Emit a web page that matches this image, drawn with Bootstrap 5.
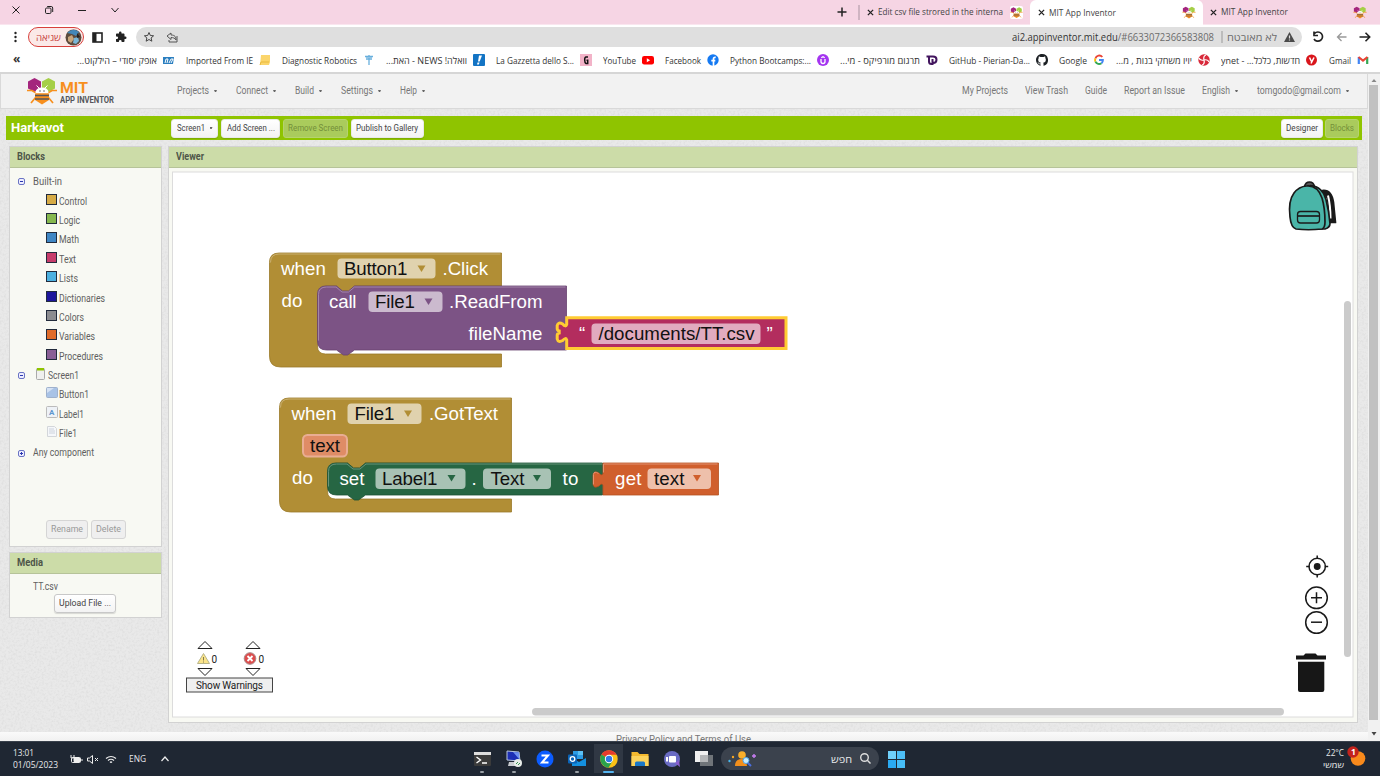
<!DOCTYPE html>
<html lang="en">
<head>
<meta charset="utf-8">
<title>MIT App Inventor</title>
<link href="https://cdn.jsdelivr.net/npm/bootstrap@5.3.0/dist/css/bootstrap.min.css" rel="stylesheet">
<style>
  body { width: 1380px; height: 776px; overflow: hidden; background: #fff; font-family: Roboto, "Liberation Sans", sans-serif; font-size: 10px; line-height: 1; color: #333; }
  svg { display: block; flex: none; overflow: visible; }
  [data-w] { white-space: nowrap; flex: none; display: inline-block; transform-origin: left center; }
  .seg { font-family: "Open Sans", "Noto Sans", "Liberation Sans", sans-serif; }
  .tabstrip { height: 25px; background: linear-gradient(#f6d5e4 24px, #fae6ef 24px); }
  .winctl { width: 128px; padding-left: 11px; gap: 23px; height: 20px; }
  .btab { height: 24px; font-size: 9.2px; color: #444; }
  .btab.cur { background: #fff; border-radius: 6px 6px 0 0; height: 25px; }
  .addrbar { height: 24px; background: #fff; }
  .profile { width: 56px; height: 20px; border: 1px solid #d8403c; border-radius: 10px; background: #fbe9e8; color: #c7413c; font-size: 9px; margin-left: 6px; padding-right: 1px; }
  .omni { height: 20px; width: 1166px; border-radius: 10px; background: #dfdfdf; color: #333; font-size: 10px; }
  .omni .dim { color: #6c6c6c; }
  .bookbar { height: 25px; background: #fff; border-bottom: 2px solid #d6d6d6; font-size: 9px; color: #333; padding: 0 0 1px 13px; }
  .bookbar .bm { margin-right: 11px; gap: 6px; }
  .pagearea { height: 667px; position: relative; }
  .leftpage { width: 1368px; background: #e9e9e9 url("data:image/svg+xml,%3Csvg xmlns='http://www.w3.org/2000/svg' width='120' height='120'%3E%3Cfilter id='n'%3E%3CfeTurbulence type='fractalNoise' baseFrequency='.45' numOctaves='2' stitchTiles='stitch'/%3E%3CfeColorMatrix values='0 0 0 0 .5 0 0 0 0 .5 0 0 0 0 .5 .5 0 0 0 -.21'/%3E%3C/filter%3E%3Crect width='120' height='120' filter='url(%23n)'/%3E%3C/svg%3E"); }
  .apphead { height: 35px; background: #f2f2f2; border: 1px solid #d9d9d9; border-top: 0; color: #777; }
  .logo-txt b { display: block; color: #f78f1e; font-size: 15px; line-height: 14px; }
  .logo-txt > span { color: #55565a; font-weight: 700; font-size: 8.5px; line-height: 7px; }
  .menu-item { margin-right: 19px; }
  .dot { width: 3px; height: 2px; background: #666; clip-path: polygon(0 0, 100% 0, 70% 100%, 30% 100%); margin-left: 5px; }
  .greenbar { height: 24px; margin: 7px 6px 0; background: #8fc400; }
  .proj { font-size: 13.5px; font-weight: 700; color: #fff; width: 165px; padding-left: 5px; }
  .abtn { height: 19px; border: 1px solid #c8c8c8; border-radius: 3px; background: linear-gradient(#fff, #f3f3f3); color: #444; font-size: 9px; box-shadow: 0 1px 1px #0002; }
  .greenbar .abtn { border-color: #e9e9e9; }
  .greenbar .abtn.off { background: #aacb5c; color: #74903a; border-color: #b5d36e; box-shadow: none; }
  .abtn.off { background: #efefef; color: #999; border-color: #d5d5d5; box-shadow: none; }
  .panel { background: #f8f9f3; border: 1px solid #d2d2d2; }
  .panel-t { height: 21px; background: #ccdca8; border-bottom: 1px solid #b6c399; font-weight: 700; color: #4e5548; padding: 0 6.500px; }
  .side { width: 153px; margin-left: 9px; }
  .treerow { height: 19.4px; color: #606060; }
  .toggle-c { width: 23px; padding-left: 8px; }
  .lv1 { padding-left: 36px; gap: 2px; }
  .lv1 > span:last-child { margin-top: 1px; }
  .sw { width: 11px; height: 11px; border: 1px solid #222b3c; margin-bottom: 4px; flex: none; }
  .foot { height: 9px; margin-top: 9px; background: linear-gradient(#fafafa, #f1f1f1); overflow: hidden; color: #777; }
  .vscroll { width: 12px; background: #f1f1f1; }
  .vscroll .thumb { width: 9px; height: 635px; background: #c1c1c1; margin-left: 1px; }
  .taskbar { height: 35px; background: #1f2733; color: #e8eaec; border-top: 1px solid #39414c; font-size: 8.5px; }
  .ti { width: 31.7px; height: 34px; padding-top: 8px; }
  .ti svg { margin: 0 auto; }
  .ti i { display: block; width: 4px; height: 2px; border-radius: 1px; background: #9aa0a6; margin: 3px auto 0; }
  .ti.on { background: linear-gradient(#303844, #303844) center 2px / 29px 29px no-repeat; }
  .ti.on i { width: 11px; background: #54b4f0; }
  .find { width: 158px; height: 23px; border-radius: 12px; background: #3b424d; margin-left: 1px; }
  .blk text { font-family: "Liberation Sans", Arial, sans-serif; font-size: 18.7px; fill: #fff; }
  .blk text.k { fill: #111; }
  .warn text { font-family: Roboto, sans-serif; font-size: 10px; fill: #222; }
</style>
</head>
<body class="d-flex flex-column">
<svg width="0" height="0" class="position-absolute">
  <symbol id="bee" viewBox="0 0 32 28">
    <path d="M8.500 1l6.500 3.500v7L8.500 15 2 11.500v-7z" fill="#a4257d"/>
    <path d="M22.500 1L29 4.500v7L22.500 15 16 11.500v-7z" fill="#a5cf47"/>
    <path d="M1 13.500h5l4 2.500h12l4-2.500h5M5 26l5-6M27 26l-5-6" stroke="#f78f1e" stroke-width="1.700" fill="none"/>
    <path d="M9 17h14v6l-7 4.500L9 23z" fill="#f78f1e"/>
    <path d="M9 18.500h14M9 22h14" stroke="#55565a" stroke-width="1.300"/>
    <path d="M9.500 16q0-5.500 6.500-5.500t6.500 5.500z" fill="#fff"/>
    <path d="M13 11l-2.500-2.500M19 11l2.500-2.500" stroke="#fff"/><circle cx="14" cy="14" r=".7" fill="#444"/><circle cx="18" cy="14" r=".7" fill="#444"/>
  </symbol>
  <symbol id="cls" viewBox="0 0 8 8"><path d="M1 1l6 6M7 1L1 7" stroke="#222" stroke-width="1.500"/></symbol>
</svg>

<!-- tab strip -->
<div class="tabstrip d-flex flex-none">
  <div class="winctl d-flex align-items-center">
    <svg width="10" height="10" viewBox="0 0 10 10" stroke="#222" fill="none"><path d="M1.500 1.500l7 7M8.500 1.500l-7 7"/></svg>
    <svg width="10" height="10" viewBox="0 0 10 10" stroke="#222" fill="none"><rect x="1.500" y="3" width="5.500" height="5.500" rx="1.200"/><path d="M3.200 1.500h4q1.500 0 1.500 1.500v4"/></svg>
    <svg width="10" height="10" viewBox="0 0 10 10" stroke="#222"><path d="M1 5.500h8"/></svg>
    <svg width="10" height="10" viewBox="0 0 10 10" stroke="#222" fill="none"><path d="M1.500 3l3.500 4 3.500-4"/></svg>
  </div>
  <div class="ms-auto d-flex">
    <div class="btab d-flex align-items-center seg" style="width:193px">
      <svg width="10" height="10" viewBox="0 0 10 10"><path d="M5 .5v9M.5 5h9" stroke="#222" stroke-width="1.500"/></svg>
      <svg style="margin-left:11px" width="2" height="15"><path d="M1 0v15" stroke="#a993a0"/></svg>
      <svg style="margin-left:7px" width="7" height="7"><use href="#cls"/></svg>
      <span class="ps-1"></span><span data-w="125">Edit csv file strored in the interna</span>
      <svg style="margin-left:7px" width="13" height="13"><rect width="13" height="13" rx="2" fill="#fff"/><use href="#bee" width="13" height="13"/></svg>
    </div>
    <div class="btab cur d-flex align-items-center seg" style="width:173px;padding-left:8px">
      <svg width="7" height="7"><use href="#cls"/></svg>
      <span class="ps-1"></span><span data-w="67">MIT App Inventor</span>
      <svg class="ms-auto" style="margin-right:7px" width="14" height="13"><use href="#bee" width="14" height="13"/></svg>
    </div>
    <div class="btab d-flex align-items-center seg" style="width:177px;padding-left:7px">
      <svg width="7" height="7"><use href="#cls"/></svg>
      <span class="ps-1"></span><span data-w="67">MIT App Inventor</span>
      <svg class="ms-auto" style="margin-right:13px" width="14" height="13"><use href="#bee" width="14" height="13"/></svg>
    </div>
  </div>
</div>

<!-- address row -->
<div class="addrbar d-flex align-items-center">
  <svg style="margin-left:13px" width="4" height="12" fill="#222"><circle cx="2.500" cy="2" r="1.200"/><circle cx="2.500" cy="6" r="1.200"/><circle cx="2.500" cy="10" r="1.200"/></svg>
  <div class="profile d-flex align-items-center seg" style="margin-left:11px"><span style="width:7px"></span><span data-w="25" dir="rtl">שגיאה</span>
    <svg class="ms-auto" width="17" height="17" viewBox="0 0 17 17"><circle cx="8.500" cy="8.500" r="8" fill="#5d4a3c"/><path d="M2 4Q8-2 14 3l-3 4-4-2z" fill="#4387b8"/><path d="M3 8l4-2 2 4-3 4-3-2z" fill="#c8a57c"/><path d="M9 9l4-1 1 4-3 3-3-1z" fill="#79b5d6"/><path d="M12 4l3 4-3 1z" fill="#222"/></svg>
  </div>
  <svg style="margin-left:8px" width="11" height="11" viewBox="0 0 11 11"><rect x="1" y="1" width="9" height="9" fill="#fff" stroke="#222" stroke-width="1.600"/><path d="M1 1h3.500v9H1z" fill="#222"/></svg>
  <svg style="margin-left:12px" width="12" height="12" viewBox="0 0 24 24" fill="#222"><path d="M20.500 11H19V7c0-1.100-.9-2-2-2h-4V3.500a2.500 2.500 0 0 0-5 0V5H4c-1.100 0-2 .9-2 2v3.800h1.500a2.700 2.700 0 0 1 0 5.400H2V20c0 1.100.9 2 2 2h3.800v-1.500a2.700 2.700 0 0 1 5.400 0V22H17c1.100 0 2-.9 2-2v-4h1.500a2.500 2.500 0 0 0 0-5z"/></svg>
  <div class="omni d-flex align-items-center seg" style="margin-left:9px">
    <svg style="margin-left:7px" width="12" height="12" viewBox="0 0 24 24" fill="none" stroke="#444" stroke-width="2"><path d="M12 3l2.700 6 6.500.6-5 4.300 1.500 6.500L12 17l-5.700 3.400 1.500-6.500-5-4.300 6.500-.6z"/></svg>
    <svg style="margin-left:11px" width="12" height="11" viewBox="0 0 12 11" fill="none" stroke="#555"><path d="M1 4l4-3v2c4 0 5 2 5 5-1-2-3-2.500-5-2.500V7.500zM3 8v2h8V4"/></svg>
    <span class="ms-auto"></span>
    <span data-w="202">ai2.appinventor.mit.edu<span class="dim">/#6633072366583808</span></span>
    <svg style="margin:0 4px 0 7px" width="2" height="12"><path d="M1 0v12" stroke="#999"/></svg>
    <span class="dim" data-w="50" dir="rtl">לא מאובטח</span>
    <svg style="margin:0 7px 0 7px" width="11" height="10" viewBox="0 0 11 10"><path d="M5.500 0L11 10H0z" fill="#4a4a4a"/><path d="M5.500 3.500v3M5.500 7.500v1" stroke="#dfdfdf" stroke-width="1.200"/></svg>
  </div>
  <svg style="margin-left:10px" width="13" height="12" viewBox="0 0 13 12" fill="none" stroke="#222" stroke-width="1.700"><path d="M2.500 2.500A4.600 4.600 0 1 1 2 8M2 .5v4h4"/></svg>
  <svg style="margin-left:11px" width="11" height="10" viewBox="0 0 11 10" fill="none" stroke="#999" stroke-width="1.300"><path d="M10.500 5H1.500M5.500 1l-4 4 4 4"/></svg>
  <svg style="margin-left:12px" width="12" height="10" viewBox="0 0 12 10" fill="none" stroke="#222" stroke-width="1.600"><path d="M.5 5h10M6.500 .8L10.700 5 6.500 9.200"/></svg>
</div>

<!-- bookmarks -->
<div class="bookbar d-flex align-items-center seg">
  <b style="width:66px;font-size:12px;line-height:8px;padding-bottom:3px">«</b>
  <div class="bm d-flex align-items-center"><span data-w="80" dir="rtl">אופק יסודי – הילקוט...</span><svg width="12" height="12"><path d="M0 3h11l-1 7H0z" fill="#2b7fc0"/><path d="M2 9l1-4 2 0-1 4M6 9l2-4h2l-2 4" stroke="#fff" fill="none"/></svg></div>
  <div class="bm d-flex align-items-center"><span data-w="67">Imported From IE</span><svg width="12" height="12"><path d="M2 1h9v7l-1 3H1z" fill="#fbd56b"/><path d="M1 11l1-3h8" fill="none" stroke="#e9b93c"/></svg></div>
  <div class="bm d-flex align-items-center"><span data-w="75">Diagnostic Robotics</span><svg width="12" height="12" stroke="#69b0dd" fill="none"><path d="M2 2.500h8M6 1v10M3 5h6M4 2v2M8 2v2" stroke-width="1.300"/></svg></div>
  <div class="bm d-flex align-items-center"><span data-w="81" dir="rtl">וואלה! NEWS - האת...</span><svg width="12" height="12"><rect width="12" height="12" rx="1" fill="#1374c4"/><path d="M6 1.500h3L6.700 7.500H5zM4.500 8.500h2l-.6 2H4z" fill="#fff"/></svg></div>
  <div class="bm d-flex align-items-center"><span data-w="78">La Gazzetta dello S...</span><svg width="12" height="12"><rect width="12" height="12" fill="#f2b3c8"/><path d="M8 3H6Q4.700 3 4.700 6T6 9.500h1.700V6.200H6.500" fill="none" stroke="#111" stroke-width="1.500"/></svg></div>
  <div class="bm d-flex align-items-center"><span data-w="33">YouTube</span><svg width="12" height="12"><rect y="2" width="12" height="8.500" rx="2.200" fill="#f00"/><path d="M4.800 4.200v4l3.300-2z" fill="#fff"/></svg></div>
  <div class="bm d-flex align-items-center"><span data-w="36">Facebook</span><svg width="12" height="12"><circle cx="6" cy="6" r="5.700" fill="#1479f2"/><path d="M6.500 12V5q0-2 2.200-1.600M4.300 6.700h4" fill="none" stroke="#fff" stroke-width="1.700"/></svg></div>
  <div class="bm d-flex align-items-center"><span data-w="81">Python Bootcamps:...</span><svg width="12" height="12"><circle cx="6" cy="6" r="6" fill="#a435f0"/><path d="M4 5v2.500q0 2 2 2t2-2V5M4.300 3.700L6 2.700l1.700 1" fill="none" stroke="#fff" stroke-width="1.300"/></svg></div>
  <div class="bm d-flex align-items-center"><span data-w="80" dir="rtl">תרגום מורפיקס - מי...</span><svg width="12" height="12" stroke="#42155e" stroke-width="2" fill="none"><path d="M.5 2.500h6.500q3.500 0 3.500 3.200T7 9H6M3 3v4.500q0 2.500 2.500 2.500M6.500 5v6"/></svg></div>
  <div class="bm d-flex align-items-center"><span data-w="81">GitHub - Pierian-Da...</span><svg width="12" height="12" viewBox="0 0 16 16" fill="#1b1f23"><path d="M8 0C3.580 0 0 3.580 0 8c0 3.540 2.290 6.530 5.470 7.590.4.070.55-.17.55-.38v-1.490c-2.010.37-2.530-.49-2.690-.94-.09-.23-.48-.94-.82-1.130-.28-.15-.68-.52-.01-.53.63-.01 1.080.58 1.230.82.72 1.210 1.870.87 2.330.66.070-.52.280-.87.510-1.070-1.780-.2-3.640-.89-3.640-3.950 0-.87.310-1.590.82-2.150-.08-.2-.36-1.020.08-2.120 0 0 .67-.21 2.200.82a7.600 7.600 0 0 1 4 0c1.530-1.040 2.200-.82 2.200-.82.44 1.100.16 1.920.08 2.120.51.560.82 1.270.82 2.150 0 3.070-1.870 3.750-3.650 3.950.29.250.54.730.54 1.480v2.200c0 .210.150.460.550.380A8 8 0 0 0 8 0z"/></svg></div>
  <div class="bm d-flex align-items-center"><span data-w="28">Google</span><svg width="12" height="12" fill="none" stroke-width="1.900"><path d="M9.300 3A4 4 0 0 0 2.400 4.500" stroke="#ea4335"/><path d="M2.400 4.500a4 4 0 0 0 0 3.200" stroke="#fbbc05"/><path d="M2.400 7.700A4 4 0 0 0 8.500 9.200" stroke="#34a853"/><path d="M8.500 9.200A4 4 0 0 0 9.900 6H6" stroke="#4285f4"/></svg></div>
  <div class="bm d-flex align-items-center"><span data-w="76" dir="rtl">יויו משחקי בנות , מ...</span><svg width="12" height="12"><circle cx="6" cy="6" r="5.700" fill="#d8293a"/><path d="M6 6Q5 2 8 1M6 6q4-1 5 2M6 6q1 4-2 5M6 6Q2 7 1 4" fill="none" stroke="#fff" stroke-width="1.200"/></svg></div>
  <div class="bm d-flex align-items-center"><span data-w="79" dir="rtl">חדשות, כלכל... - ynet</span><svg width="12" height="12"><circle cx="5.500" cy="6" r="5.500" fill="#d9161c"/><path d="M3.500 3.500l2 4M8 3.500L5 9.500" stroke="#fff" stroke-width="1.500"/></svg></div>
  <div class="bm d-flex align-items-center"><span data-w="22">Gmail</span><svg width="12" height="12" fill="none" stroke-width="2.200"><path d="M1.800 10V3" stroke="#4285f4"/><path d="M10.200 10V3" stroke="#34a853"/><path d="M1.500 3L6 6.500 10.500 3" stroke="#ea4335"/></svg></div>
</div>

<!-- page -->
<div class="pagearea d-flex">
  <div class="leftpage d-flex flex-column">
    <div class="apphead d-flex align-items-center">
      <svg style="margin-left:25px" width="32" height="28"><use href="#bee"/></svg>
      <div class="logo-txt" style="margin-left:2px;width:118px;padding-top:3px"><b><span data-w="28">MIT</span></b><span data-w="54">APP INVENTOR</span></div>
      <div class="menu-item d-flex align-items-center" style="margin-left:-1px"><span data-w="32">Projects</span><span class="dot"></span></div>
      <div class="menu-item d-flex align-items-center"><span data-w="32">Connect</span><span class="dot"></span></div>
      <div class="menu-item d-flex align-items-center"><span data-w="19">Build</span><span class="dot"></span></div>
      <div class="menu-item d-flex align-items-center"><span data-w="32">Settings</span><span class="dot"></span></div>
      <div class="menu-item d-flex align-items-center"><span data-w="17">Help</span><span class="dot"></span></div>
      <div class="d-flex align-items-center ms-auto" style="gap:17px">
        <span data-w="46">My Projects</span><span data-w="43">View Trash</span><span data-w="22">Guide</span><span data-w="61">Report an Issue</span>
        <div class="d-flex align-items-center"><span data-w="28">English</span><span class="dot"></span></div>
        <div class="d-flex align-items-center" style="margin:0 18px 0 2px"><span data-w="84">tomgodo@gmail.com</span><span class="dot"></span></div>
      </div>
    </div>

    <div class="greenbar d-flex align-items-center">
      <div class="proj"><span data-w="53">Harkavot</span></div>
      <div class="abtn d-flex align-items-center justify-content-center" style="width:47px"><span data-w="28">Screen1</span><span class="dot"></span></div>
      <div class="abtn d-flex align-items-center justify-content-center" style="width:59px;margin-left:3px"><span data-w="48">Add Screen ...</span></div>
      <div class="abtn off d-flex align-items-center justify-content-center" style="width:65px;margin-left:3px"><span data-w="55">Remove Screen</span></div>
      <div class="abtn d-flex align-items-center justify-content-center" style="width:73px;margin-left:3px"><span data-w="62">Publish to Gallery</span></div>
      <div class="abtn d-flex align-items-center justify-content-center ms-auto" style="width:42px"><span data-w="32">Designer</span></div>
      <div class="abtn off d-flex align-items-center justify-content-center" style="width:34px;margin:0 3px 0 2px"><span data-w="24">Blocks</span></div>
    </div>

    <div class="d-flex" style="margin-top:6px;height:577px">
      <div class="side d-flex flex-column">
        <div class="panel d-flex flex-column" style="height:401px">
          <div class="panel-t d-flex align-items-center"><span data-w="28">Blocks</span></div>
          <div style="padding-top:4px" id="tree"></div>
          <div class="d-flex mt-auto" style="margin:0 0 7px 36px;gap:2.500px">
            <div class="abtn off d-flex align-items-center justify-content-center" style="width:42px"><span data-w="32">Rename</span></div>
            <div class="abtn off d-flex align-items-center justify-content-center" style="width:35px"><span data-w="25">Delete</span></div>
          </div>
        </div>
        <div class="panel" style="height:66px;margin-top:5px">
          <div class="panel-t d-flex align-items-center"><span data-w="26">Media</span></div>
          <div style="padding:8px 0 0 23px;color:#606060;height:20px"><span data-w="25">TT.csv</span></div>
          <div class="abtn d-flex align-items-center justify-content-center" style="width:62px;margin-left:44px"><span data-w="52">Upload File ...</span></div>
        </div>
      </div>
      <div class="panel" style="width:1190px;margin-left:6px">
        <div class="panel-t d-flex align-items-center"><span data-w="28">Viewer</span></div>
        <svg style="margin:3px 0 0 3px" width="1182" height="547" viewBox="172.500 171.500 1182 547" class="blk">
          <rect x="173" y="172.500" width="1180.500" height="545" fill="#fff" stroke="#dcdcdc"/>
          <!-- when Button1.Click -->
          <path d="M270 263q0-9.500 9.500-9.500H502v33H355l-6 5h-6l-6-5h-11q-8 0-8 8v52q0 8 8 8h176v13H281q-11 0-11-11z" fill="#b18e35" stroke="#9a7a28" stroke-width=".8"/>
          <path d="M271 263q0-8.500 8.500-8.500H501" fill="none" stroke="#cbb172"/>
          <path d="M318 295q0-8.500 8.500-8.500H337l6 5h6l6-5h212v64H355l-7 5h-4l-7-5h-10q-9 0-9-9z" fill="#7c5385" stroke="#67416f" stroke-width=".8"/>
          <path d="M319 341v-46q0-7.500 8-7.500h9.500l6 5h6.500l6-5h211" fill="none" stroke="#a386aa"/>
          <text x="281.500" y="275" textLength="45">when</text>
          <rect x="338" y="259" width="98" height="20" rx="4" fill="#e0d2ae"/><text class="k" x="344.500" y="275" textLength="63.500">Button1</text><path d="M418 266h8l-4 6.500z" fill="#b18e35"/>
          <text x="443" y="275" textLength="45.500">.Click</text>
          <text x="282" y="307" textLength="21">do</text>
          <text x="329.500" y="308" textLength="27.500">call</text>
          <rect x="369" y="292" width="74" height="20.500" rx="4" fill="#cbbace"/><text class="k" x="375.500" y="308" textLength="40">File1</text><path d="M425 299h8l-4 6.500z" fill="#7c5385"/>
          <text x="449.500" y="308" textLength="93.500">.ReadFrom</text>
          <text x="469" y="340" textLength="74">fileName</text>
          <path d="M567.200 318.200H786.500V349H567.200v-8.500q-1-3-4 .5-4.500 2.500-5.500-1.500v-3.500q0-2 2-2.500v-2q-2-.5-2-2.500v-3q1-4 5.500-1.500 3 3.500 4 .5z" fill="#b32d5e" stroke="#fc3" stroke-width="3"/>
          <text x="579.500" y="340" textLength="7">“</text><text x="767" y="340" textLength="7">”</text>
          <rect x="592" y="324" width="169" height="20.500" rx="4" fill="#e1abbf"/><text class="k" x="599" y="340" textLength="156">/documents/TT.csv</text>
          <!-- when File1.GotText -->
          <path d="M280 408q0-9.500 9.500-9.500H512v65H366l-6 5h-6l-6-5h-12q-8 0-8 8v20q0 8 8 8h176v13H291q-11 0-11-11z" fill="#b18e35" stroke="#9a7a28" stroke-width=".8"/>
          <path d="M281 408q0-8.500 8.500-8.500H511" fill="none" stroke="#cbb172"/>
          <path d="M328 472q0-8.500 8.500-8.500H348l6 5h6l6-5h237v32H366l-7 5h-4l-7-5h-11q-9 0-9-9z" fill="#266643" stroke="#1b5033" stroke-width=".8"/>
          <path d="M329 487v-15q0-7.500 8-7.500h10.500l6 5h7l6-5H603" fill="none" stroke="#67947b"/>
          <text x="292" y="420" textLength="45">when</text>
          <rect x="348" y="404" width="74" height="20.500" rx="4" fill="#e0d2ae"/><text class="k" x="355" y="420" textLength="40">File1</text><path d="M404.500 411h8l-4 6.500z" fill="#b18e35"/>
          <text x="429.500" y="420" textLength="69">.GotText</text>
          <rect x="303.500" y="435.500" width="44" height="21.500" rx="4.500" fill="#df8c66" stroke="#e9ad93" stroke-width="2"/><text class="k" x="310.500" y="452" textLength="30">text</text>
          <text x="292.500" y="484.500" textLength="21">do</text><text x="340" y="485" textLength="25">set</text>
          <rect x="376" y="469" width="90" height="20.500" rx="4" fill="#a8c2b4"/><text class="k" x="382.500" y="485" textLength="55.500">Label1</text><path d="M448 475.500h8l-4 6.500z" fill="#266643"/>
          <text x="472" y="485">.</text>
          <rect x="483.500" y="469" width="68" height="20.500" rx="4" fill="#a8c2b4"/><text class="k" x="491" y="485" textLength="34">Text</text><path d="M533.500 475.500h8l-4 6.500z" fill="#266643"/>
          <text x="563" y="485" textLength="16">to</text>
          <path d="M603.500 463.500H719v32H603.500v-9.500q-1-3-4 .5-5.500 3-6-2v-9q.5-5 6-2 3 3.500 4 .5z" fill="#d05f2d" stroke="#b5501f" stroke-width=".8"/>
          <path d="M604 473v-8.500h114M594 485v-10q.5-4 5-1" fill="none" stroke="#e19272"/>
          <text x="615.500" y="485" textLength="26.500">get</text>
          <rect x="648" y="469" width="63.500" height="20.500" rx="4" fill="#eec0ab"/><text class="k" x="654.500" y="485" textLength="30.500">text</text><path d="M693.500 475.500h8l-4 6.500z" fill="#d05f2d"/>
          <!-- backpack -->
          <g stroke="#1a1a1a" stroke-width="1.700" stroke-linejoin="round">
            <path d="M1323 191q9-1 11 12l2 20h-5l-3-24z" fill="#1a1a1a"/><path d="M1328.500 196q2.500 10 2.500 23" stroke="#fff" stroke-width="2" fill="none"/>
            <path d="M1305 187q1-4.500 5-4.500t5 4.500" fill="#555"/>
            <path d="M1311 186q12 1 15.500 14 3 12 4 24 0 4-5 5.500h-16z" fill="#4ab5a8"/>
            <path d="M1307 186.500q11-1 15.500 12 3 10 3 24 0 6-3 7-14 1.500-26 0-5-1.500-6-12-2-16 4-24 5-6.500 12.500-7z" fill="#4ab5a8"/>
            <rect x="1298" y="212" width="22" height="11.500" rx="3" fill="#4ab5a8" stroke-width="1.300"/><path d="M1298 216.500h22"/>
          </g>
          <!-- scrollbars -->
          <rect x="1344.500" y="301.500" width="7" height="356" rx="3.500" fill="#cbcbcb"/>
          <rect x="532.500" y="708.500" width="752" height="7.500" rx="3.700" fill="#cbcbcb"/>
          <!-- zoom controls and trash -->
          <g fill="none" stroke="#1a1a1a" stroke-width="1.500"><circle cx="1317.700" cy="567" r="8.200"/><path d="M1317.700 556v3.500M1317.700 574.500v3.500M1306.700 567h3.500M1325.200 567h3.500"/><circle cx="1317.700" cy="567" r="2.700" fill="#1a1a1a"/><circle cx="1317" cy="598.300" r="10.800"/><path d="M1311.500 598.300h11M1317 592.800v11"/><circle cx="1317" cy="623" r="10.800"/><path d="M1311.500 622.700h11"/></g>
          <path d="M1296.500 656h7.500l2-2h10l2 2h8.500v4h-30zM1298.500 662.300h26.300v28.200q0 2-2 2h-22.300q-2 0-2-2z" fill="#171717"/>
          <!-- warnings -->
          <g class="warn">
            <g fill="#fff" stroke="#222"><path d="M198.500 649h14l-7-7zM246.500 649h14l-7-7zM198.500 669h14l-7 7zM246.500 669h14l-7 7z"/></g>
            <path d="M204 654l6 10h-12z" fill="#fbe48a" stroke="#b8b58a" stroke-linejoin="round"/><path d="M204 657.500v3.500M204 662v1" stroke="#807950"/>
            <circle cx="250.500" cy="659" r="5.800" fill="#dd4b4b" stroke="#a88"/><path d="M248 656.500l5 5M253 656.500l-5 5" stroke="#fff" stroke-width="1.800"/>
            <text x="212" y="663.500">0</text><text x="259" y="663.500">0</text>
            <rect x="187" y="678.500" width="86" height="14" fill="#efefef" stroke="#444"/><text x="196.500" y="689.500" textLength="67">Show Warnings</text>
          </g>
        </svg>
      </div>
    </div>
    <div class="foot d-flex align-items-start"><span style="width:616px"></span><span style="padding-top:3px"><span data-w="135">Privacy Policy and Terms of Use</span></span></div>
  </div>
  <div class="vscroll"><svg width="12" height="11"><path d="M3.500 8h5L6 5z" fill="#888"/></svg><div class="thumb"></div><svg width="12" height="20"><path d="M3.500 12h5L6 15.500z" fill="#444"/></svg></div>
</div>

<!-- taskbar -->
<div class="taskbar d-flex seg">
  <div style="margin:5px 0 0 13px;width:57px;line-height:11.500px"><span data-w="21">13:01</span><br><span data-w="45">01/05/2023</span></div>
  <svg style="margin-top:12px" width="47" height="11" fill="none" stroke="#eee"><rect x="1.500" y="3.500" width="9" height="5" rx="1"/><path d="M4 4.500h6v3H4z" fill="#eee"/><path d="M1 1v3h3V1M12 5v2M17.500 4v3h2l3 2.500V1.500l-3 2.500zM25 4l3 3M28 4l-3 3"/><path d="M36 4.500q5-4 10 0M38 6.500q3-2.500 6 0M40 8.500q1-1 2 0" stroke-width="1.200"/></svg>
  <div style="margin:13px 0 0 12px"><span data-w="17">ENG</span></div>
  <svg style="margin:14px 0 0 15px" width="8" height="6" fill="none" stroke="#eee" stroke-width="1.200"><path d="M.5 5L4 1l3.500 4"/></svg>
  <div class="d-flex" style="margin-left:297px">
    <div class="ti"><svg width="18" height="18"><rect x="1" y="2" width="17" height="14" rx="1" fill="#3b3b3b"/><path d="M1 2h17v3H1z" fill="#ddd"/><path d="M3.500 7l4 3-4 3M9 13h5" stroke="#fff" fill="none" stroke-width="1.400"/></svg><i></i></div>
    <div class="ti"><svg width="18" height="18"><path d="M2 1l12 1 1 9-13-1z" fill="#1d2fb5" stroke="#b9c7dc"/><path d="M8 2l6 .5.5 7z" fill="#6d8ff0"/><path d="M4 12h9l2 4H3z" fill="#c9ccd0"/><circle cx="13" cy="13" r="4" fill="#e7ece8"/><path d="M11 14l2-2M13 15l2-2" stroke="#3a9451"/></svg><i></i></div>
    <div class="ti"><svg width="18" height="18"><circle cx="9" cy="9" r="8.500" fill="#0b5cff"/><path d="M5.500 5.500h6.500l-6 7h6.500" fill="none" stroke="#fff" stroke-width="2"/></svg></div>
    <div class="ti"><svg width="18" height="18"><path d="M5 1h10v8H5z" fill="#2b9be5"/><path d="M4 8l7 4 7-4v8H4z" fill="#1490df"/><path d="M10 1h5v4h-5z" fill="#5bc0f5"/><rect y="4.500" width="9" height="9" rx="1" fill="#0a64b8"/><circle cx="4.500" cy="9" r="2.300" fill="none" stroke="#fff" stroke-width="1.300"/></svg><i></i></div>
    <div class="ti on"><svg width="18" height="18" viewBox="0 0 18 18"><circle cx="9" cy="9" r="8.700" fill="#fbc116"/><path d="M9 9L1.500 4.600A8.700 8.700 0 0 1 16.600 4.700H9z" fill="#e63b2e"/><path d="M9 9l-7.500-4.400A8.700 8.700 0 0 0 8.500 17.700L12.500 11z" fill="#2ba24c"/><circle cx="9" cy="9" r="4.200" fill="#fff"/><circle cx="9" cy="9" r="3.200" fill="#3079e8"/></svg><i></i></div>
    <div class="ti"><svg width="18" height="18"><path d="M.5 2h6l2 2h9v12H.5z" fill="#f4b92f"/><path d="M.5 6h17v10H.5z" fill="#fdd35c"/><path d="M4 16v-3q0-1.500 1.500-1.500h7q1.500 0 1.500 1.500v3z" fill="#1b78c8"/></svg></div>
    <div class="ti"><svg width="18" height="18"><circle cx="9" cy="9" r="8" fill="#6a6cc4"/><path d="M12 13l5 4-1-7z" fill="#8a5fd0"/><rect x="6" y="6" width="7" height="6.500" rx="1" fill="#fff"/><path d="M3 7h2v4.500H3z" fill="#fff"/></svg></div>
    <div class="ti"><svg width="18" height="18"><rect x="5" y="5" width="13" height="11" fill="#6f7479"/><rect y="1" width="13" height="11" fill="#f0f0f0"/><path d="M5 5h8v7H5z" fill="#b5b7b9"/></svg></div>
  </div>
  <div class="find d-flex align-items-center" style="margin-top:5px">
    <svg style="margin-left:7px" width="28" height="17"><circle cx="1.500" cy="11" r="1.200" fill="#47b7ee"/><circle cx="5" cy="7" r="1.200" fill="#f5a623"/><circle cx="14" cy="5" r="3.800" fill="#f9ae2b"/><path d="M7 16q0-7 7-7 4 0 5 7z" fill="#f28f1c"/><circle cx="18" cy="10.500" r="3" fill="#c9ecff" stroke="#4aa3e8"/><path d="M20 13l3 3" stroke="#4a6fe0" stroke-width="2"/><path d="M26 4v4M24 6h4" stroke="#c77df2" stroke-width="1.400"/></svg>
    <span class="ms-auto"></span><span dir="rtl" data-w="21" style="font-size:10px">חפש</span>
    <svg style="margin:0 8px" width="11" height="11" fill="none" stroke="#ddd" stroke-width="1.400"><circle cx="4.500" cy="4.500" r="3.800"/><path d="M7.300 7.300l3.200 3.200"/></svg>
  </div>
  <svg style="margin:9px 0 0 9px" width="17" height="17"><path d="M0 0h8v8H0z" fill="#6fd0fb"/><path d="M9 0h8v8H9z" fill="#4dbff7"/><path d="M0 9h8v8H0z" fill="#2aaaf2"/><path d="M9 9h8v8H9z" fill="#46bdf7"/></svg>
  <div class="ms-auto d-flex flex-column align-items-end" style="margin-top:5px;line-height:11.500px"><span data-w="18">22°C</span><span data-w="21" dir="rtl">שמשי</span></div>
  <svg style="margin:3px 14px 0 3px" width="19" height="22"><circle cx="11" cy="13.500" r="7.300" fill="#f98a1c"/><circle cx="6" cy="7" r="5.700" fill="#c4231c"/><text x="4" y="10" font-size="8.500" font-weight="700" fill="#fff">1</text></svg>
</div>

<script src="https://cdn.jsdelivr.net/npm/bootstrap@5.3.0/dist/js/bootstrap.bundle.min.js"></script>
<script>
  // block drawers and the component tree: label, width, swatch colour
  const tree = [
    ['Built-in', 29, '-'], ['Control', 28, '#d6ab46'], ['Logic', 21, '#86b84f'], ['Math', 20, '#3f86c4'], ['Text', 17, '#c63c6b'],
    ['Lists', 19, '#4bb0e0'], ['Dictionaries', 46, '#1d169c'], ['Colors', 25, '#8c8c90'], ['Variables', 36, '#e06c2a'], ['Procedures', 44, '#8a5f96'],
    ['Screen1', 31, '-s'], ['Button1', 30, 'button'], ['Label1', 25, 'label'], ['File1', 18, 'file'], ['Any component', 61, '+']
  ];
  const glyph = {
    button: '<svg width="11" height="12" style="margin-bottom:4px"><rect x=".5" y=".5" width="11" height="10" rx="1" fill="#a9c3e6" stroke="#9fb1cc"/><path d="M1 1h7L1 6z" fill="#d5e2f4"/></svg>',
    label: '<svg width="11" height="12" style="margin-bottom:4px"><rect x=".5" y=".5" width="11" height="11" rx="1" fill="#eef2f7" stroke="#bbb"/><text x="3" y="9" font-size="8" font-weight="700" fill="#5f97cf">A</text></svg>',
    file: '<svg width="11" height="12" style="margin-bottom:4px"><path d="M1.500 .5h7l2 2v8h-9z" fill="#f5f7fa" stroke="#d3d6da"/><path d="M3 3h5M3 5h6M3 7h6" stroke="#ccd2dc"/></svg>',
    screen: '<svg width="9" height="12" style="margin:0 3px 4px 3px"><rect x=".5" y=".5" width="8" height="11" rx="1" fill="#f0f0ee" stroke="#aaa"/><path d="M1 0h7v2.500H1z" fill="#8fc400"/></svg>'
  };
  const box = plus => `<span class="toggle-c"><svg width="7" height="7"><rect x=".5" y=".5" width="6" height="6" rx="1.500" fill="#eef" stroke="#6a74c4"/><path d="M2 3.500h3${plus ? 'M3.500 2v3' : ''}" stroke="#2b38b0"/></svg></span>`;
  document.getElementById('tree').innerHTML = tree.map(([t, w, k]) => {
    const label = `<span data-w="${w}">${t}</span>`;
    if (k === '-' || k === '+') return `<div class="treerow d-flex align-items-center">${box(k === '+')}${label}</div>`;
    if (k === '-s') return `<div class="treerow d-flex align-items-center">${box(false)}${glyph.screen}${label}</div>`;
    const icon = k[0] === '#' ? `<span class="sw" style="background:${k}"></span>` : glyph[k];
    return `<div class="treerow lv1 d-flex align-items-center">${icon}${label}</div>`;
  }).join('');

  // condense each label so that it fills its declared width
  document.querySelectorAll('[data-w]').forEach(el => {
    const w = +el.dataset.w, n = el.getBoundingClientRect().width;
    el.style.transform = `scaleX(${(w / n).toFixed(4)})`;
    el.style.marginRight = (w - n).toFixed(2) + 'px';
  });
</script>
</body>
</html>
